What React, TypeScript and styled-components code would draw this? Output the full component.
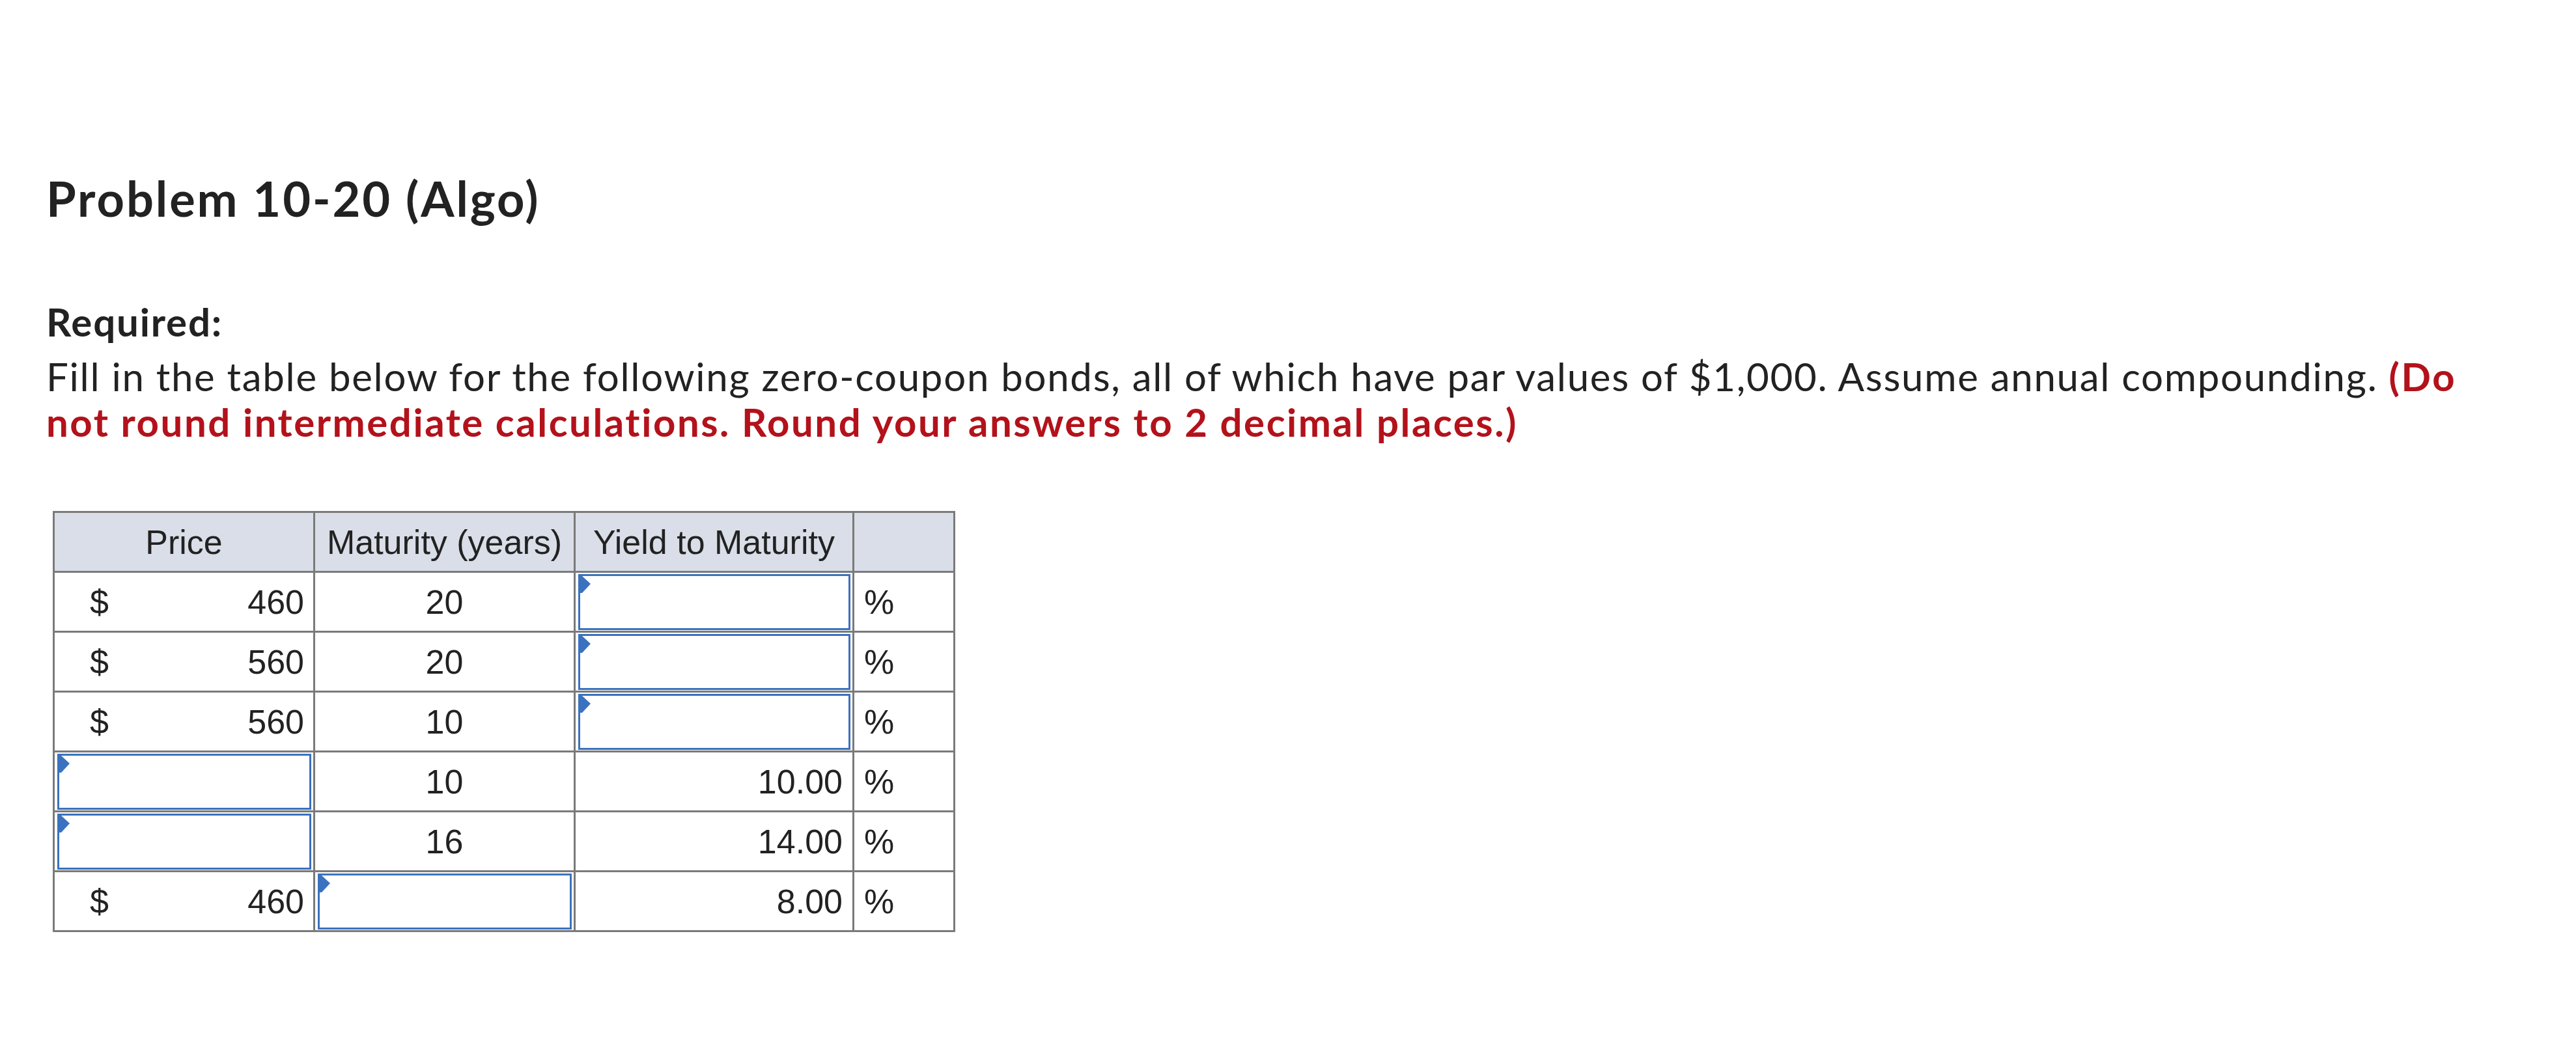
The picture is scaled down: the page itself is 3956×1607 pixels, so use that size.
import React from "react";
import styled, { createGlobalStyle } from "styled-components";

const Global = createGlobalStyle`
  html, body { margin: 0; padding: 0; background: #ffffff; }
  body { font-family: Lato, "Open Sans", sans-serif; color: #222222; }
`;

const Page = styled.main`
  padding: 262px 0 120px 71px;
  width: 3760px;
`;

const Title = styled.h1`
  margin: 0;
  font-family: Lato, sans-serif;
  font-weight: 700;
  font-size: 74px;
  letter-spacing: 2.9px;
  line-height: 86px;
  color: #222222;
`;

const Required = styled.div`
  margin-top: 111px;
  font-family: Lato, sans-serif;
  font-weight: 700;
  font-size: 60px;
  letter-spacing: 1.8px;
  line-height: 70px;
  color: #222222;
`;

const Instruction = styled.p`
  margin: 14px 0 0 0;
  font-family: Lato, sans-serif;
  font-weight: 400;
  font-size: 60px;
  letter-spacing: 1.7px;
  line-height: 70px;
  color: #222222;
`;

const Warn = styled.strong`
  font-weight: 700;
  letter-spacing: 2.5px;
  color: #b3121b;
`;

const Table = styled.table`
  margin: 102px 0 0 10px;
  border-collapse: collapse;
  table-layout: fixed;
  width: 1383px;
  font-family: "Liberation Sans", Arial, sans-serif;
  font-size: 52px;
  color: #222222;
`;

const Row = styled.tr`
  height: 92px;
`;

const Head = styled.th`
  background: #d9dee8;
  border: 3px solid #7a7a7a;
  font-weight: 400;
  text-align: center;
  padding: 0;
  white-space: nowrap;
`;

const Cell = styled.td<{ $align?: "left" | "center" | "right" }>`
  border: 3px solid #7a7a7a;
  text-align: ${(p) => p.$align ?? "center"};
  padding: 0 15px;
  white-space: nowrap;
  background: #ffffff;
`;

const InputCell = styled.td`
  border: 3px solid #7a7a7a;
  padding: 0;
  background: #ffffff;
`;

const PriceCell = styled.td`
  border: 3px solid #7a7a7a;
  padding: 0;
  background: #ffffff;
`;

const PriceWrap = styled.div`
  display: flex;
  justify-content: space-between;
  align-items: center;
  padding: 0 14px 0 54px;
`;

const AnswerBox = styled.div`
  position: relative;
  box-sizing: border-box;
  margin: 1px 3px 1px 4px;
  height: 86px;
  border: 3px solid #3a72bf;
  background: #ffffff;
`;

const Marker = styled.svg`
  position: absolute;
  left: -3px;
  top: 0px;
  width: 19px;
  height: 26px;
`;

const Answer = () => (
  <InputCell>
    <AnswerBox>
      <Marker viewBox="0 0 19 26">
        <polygon points="0,0 6,0 19,12 6,26 0,26" fill="#3a72bf" />
      </Marker>
    </AnswerBox>
  </InputCell>
);

const Price = ({ v }: { v: string }) => (
  <PriceCell>
    <PriceWrap>
      <span>$</span>
      <span>{v}</span>
    </PriceWrap>
  </PriceCell>
);

export default function App() {
  return (
    <>
      <Global />
      <Page>
        <Title>Problem 10-20 (Algo)</Title>
        <Required>Required:</Required>
        <Instruction>
          Fill in the table below for the following zero-coupon bonds, all of which have par values of $1,000. Assume
          annual compounding.{" "}
          <Warn>(Do not round intermediate calculations. Round your answers to 2 decimal places.)</Warn>
        </Instruction>
        <Table>
          <colgroup>
            <col style={{ width: 400 }} />
            <col style={{ width: 400 }} />
            <col style={{ width: 428 }} />
            <col style={{ width: 155 }} />
          </colgroup>
          <thead>
            <Row>
              <Head>Price</Head>
              <Head>Maturity (years)</Head>
              <Head>Yield to Maturity</Head>
              <Head />
            </Row>
          </thead>
          <tbody>
            <Row>
              <Price v="460" />
              <Cell>20</Cell>
              <Answer />
              <Cell $align="left">%</Cell>
            </Row>
            <Row>
              <Price v="560" />
              <Cell>20</Cell>
              <Answer />
              <Cell $align="left">%</Cell>
            </Row>
            <Row>
              <Price v="560" />
              <Cell>10</Cell>
              <Answer />
              <Cell $align="left">%</Cell>
            </Row>
            <Row>
              <Answer />
              <Cell>10</Cell>
              <Cell $align="right">10.00</Cell>
              <Cell $align="left">%</Cell>
            </Row>
            <Row>
              <Answer />
              <Cell>16</Cell>
              <Cell $align="right">14.00</Cell>
              <Cell $align="left">%</Cell>
            </Row>
            <Row>
              <Price v="460" />
              <Answer />
              <Cell $align="right">8.00</Cell>
              <Cell $align="left">%</Cell>
            </Row>
          </tbody>
        </Table>
      </Page>
    </>
  );
}
